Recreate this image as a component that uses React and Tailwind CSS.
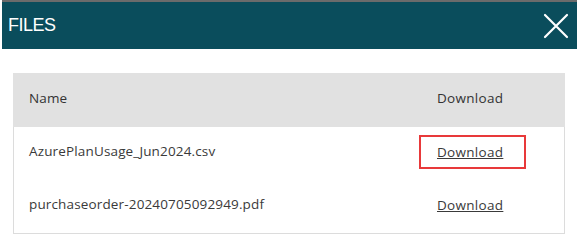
import React from "react";

const font = { fontFamily: "'Open Sans', Lato, sans-serif" };

function Row({ name, highlight }) {
  return (
    <div className="grid grid-cols-[1fr_127px] h-[53px] items-center">
      <div className="pl-[15px] text-[13.5px] tracking-[0.15px] text-[#3a3a3a] -mt-[5px]">{name}</div>
      <div className="-mt-[5px]">
        <span className="relative inline-block">
          <a href="#" className="text-[13.5px] tracking-[0.3px] text-[#3a3a3a] underline underline-offset-1">Download</a>
          {highlight && (
            <span className="absolute -left-[18px] -right-[23px] -top-[4px] -bottom-[6px] border-2 border-[#e8393a] pointer-events-none" />
          )}
        </span>
      </div>
    </div>
  );
}

export default function App() {
  return (
    <div className="w-[583px] h-[248px] bg-white" style={font}>
      <div className="ml-[2px] w-[575px] border-t-2 border-[#6b6b6b]">
        <div className="h-[47px] bg-[#0a4d5c] flex items-center justify-between pl-[6px] pr-[8px]">
          <span className="text-white text-[18px] font-['Liberation_Sans',sans-serif] tracking-[-0.5px]">FILES</span>
          <svg width="26" height="26" viewBox="0 0 26 26" className="mr-[0px]">
            <path d="M2 2 L24 24 M24 2 L2 24" stroke="#ffffff" strokeWidth="2.2" strokeLinecap="round" />
          </svg>
        </div>
      </div>
      <div className="ml-[13px] w-[552px] mt-[24px] border border-t-0 border-[#dcdcdc]">
        <div className="grid grid-cols-[1fr_127px] h-[54px] items-center bg-[#e1e1e1] -mx-px px-px">
          <div className="pl-[15px] text-[13.5px] tracking-[0.15px] text-[#333] -mt-[3px]">Name</div>
          <div className="text-[13.5px] tracking-[0.3px] text-[#333] -mt-[3px]">Download</div>
        </div>
        <Row name="AzurePlanUsage_Jun2024.csv" highlight />
        <Row name="purchaseorder-20240705092949.pdf" />
      </div>
    </div>
  );
}
